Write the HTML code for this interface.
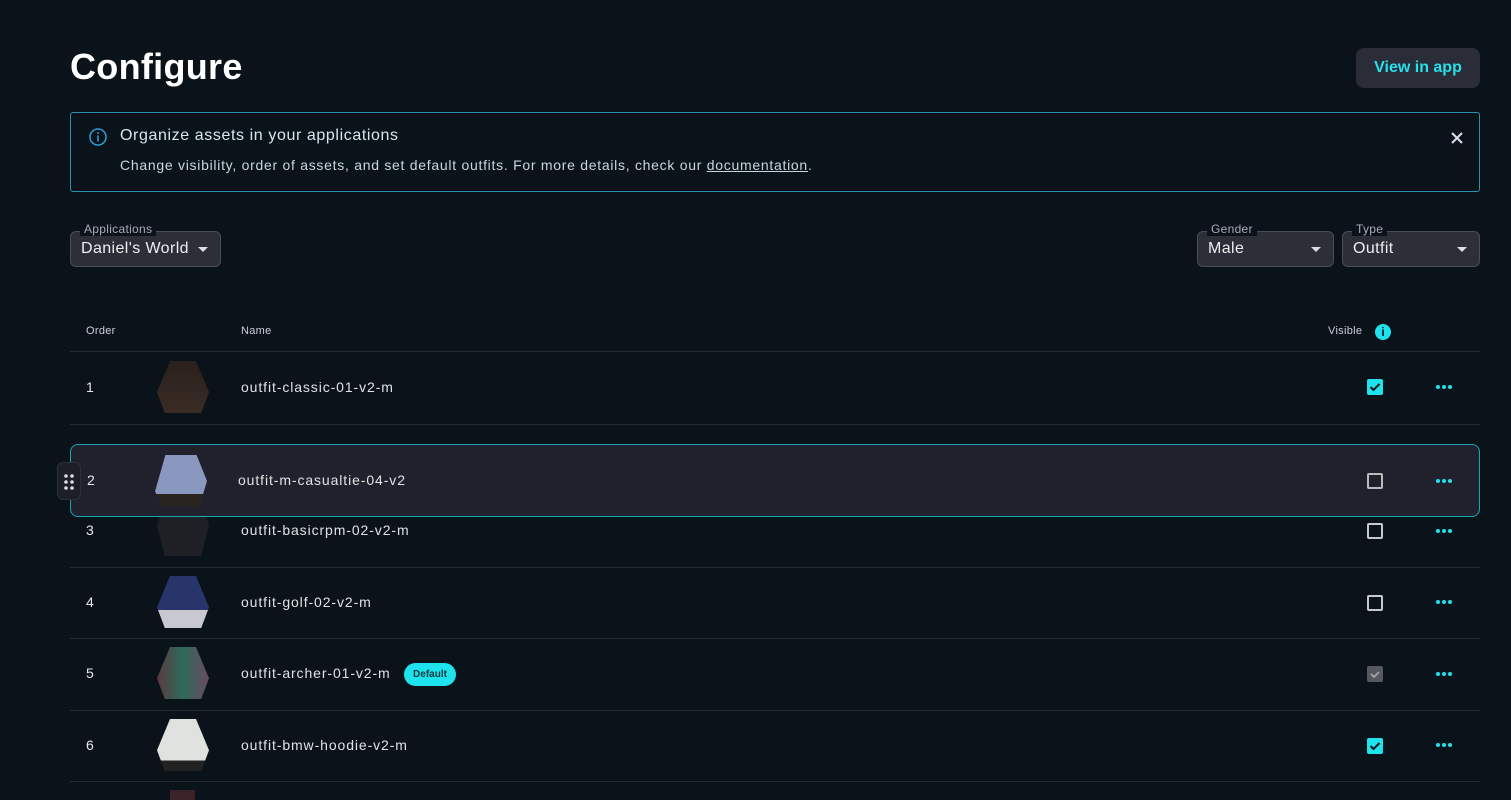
<!DOCTYPE html>
<html><head><meta charset="utf-8"><style>
*{box-sizing:border-box;margin:0;padding:0}
body{width:1511px;height:800px;overflow:hidden;background:#0a131a;font-family:"Liberation Sans",sans-serif;color:#e6e8ea;position:relative}
.a{position:absolute}
h1{position:absolute;left:70px;top:46px;font-size:36px;font-weight:bold;color:#fff;letter-spacing:0.3px}
.btn{left:1356px;top:48px;width:124px;height:40px;background:#2a2d38;border-radius:8px;color:#27e0ea;font-weight:bold;font-size:16px;text-align:center;line-height:40px}
.info{left:70px;top:112px;width:1410px;height:80px;border:1px solid #2a90b0;border-radius:3px}
.sel{background:#2c2e38;border:1px solid #4a4c58;border-radius:6px;height:36px;font-size:16px;padding-left:10px;line-height:34px;color:#eee;letter-spacing:0.4px}
.lbl{font-size:12px;color:#aab;letter-spacing:0.3px}
.caret{position:absolute;right:12px;top:15px;border-left:5px solid transparent;border-right:5px solid transparent;border-top:5px solid #ddd}
.hd{font-size:11px;color:#ccd;letter-spacing:0.3px}
.line{left:70px;width:1410px;height:1px;background:#232b33}
.num{left:86px;font-size:14px}
.name{left:241px;font-size:14px;color:#e0e2e4;letter-spacing:0.9px}
.thumb{left:157px;width:52px;height:52px}
.cb{left:1367px;width:16px;height:16px;border:2px solid #c8c8cc;border-radius:2px}
.cbon{background:#1ee3ec;border:none}
.dots{left:1436px;font-size:0}
.dots i{display:inline-block;width:4px;height:4px;border-radius:2px;background:#1ee3ec;margin-right:2px}
</style></head><body>
<h1>Configure</h1>
<div class="a btn">View in app</div>
<div class="a info">
 <svg class="a" style="left:17px;top:14px" width="20" height="20" viewBox="0 0 20 20"><circle cx="10" cy="10" r="8" fill="none" stroke="#2a9ad0" stroke-width="1.6"/><rect x="9.2" y="8.5" width="1.6" height="6" fill="#2a9ad0"/><circle cx="10" cy="6" r="1" fill="#2a9ad0"/></svg>
 <div class="a" style="left:49px;top:14px;font-size:16px;color:#d8e6ee;letter-spacing:0.6px">Organize assets in your applications</div>
 <div class="a" style="left:49px;top:44px;font-size:14px;color:#c8d6de;letter-spacing:0.72px">Change visibility, order of assets, and set default outfits. For more details, check our <u>documentation</u>.</div>
 <svg class="a" style="left:1379px;top:18px" width="14" height="14" viewBox="0 0 14 14"><path d="M2 2L12 12M12 2L2 12" stroke="#dde" stroke-width="2"/></svg>
</div>
<div class="a sel" style="left:70px;top:231px;width:151px">Daniel's World<span class="caret"></span></div>
<div class="a lbl" style="left:80px;top:222px;background:#0a131a;padding:0 4px">Applications</div>
<div class="a sel" style="left:1197px;top:231px;width:137px">Male<span class="caret"></span></div>
<div class="a lbl" style="left:1207px;top:222px;background:#0a131a;padding:0 4px">Gender</div>
<div class="a sel" style="left:1342px;top:231px;width:138px">Outfit<span class="caret"></span></div>
<div class="a lbl" style="left:1352px;top:222px;background:#0a131a;padding:0 4px">Type</div>

<div class="a hd" style="left:86px;top:325px">Order</div>
<div class="a hd" style="left:241px;top:325px">Name</div>
<div class="a hd" style="left:1328px;top:325px">Visible</div>
<div class="a" style="left:1375px;top:324px;width:16px;height:16px;border-radius:8px;background:#1ee3ec;color:#0a131a;font-size:12px;font-weight:bold;text-align:center;line-height:16px">i</div>
<div class="a line" style="top:351px"></div>

<div class="a num" style="top:379px">1</div>
<div class="a thumb" style="top:361px;background:linear-gradient(#2a201c,#3a2c24);clip-path:polygon(25% 0,75% 0,100% 60%,85% 100%,15% 100%,0 60%)"></div>
<div class="a name" style="top:379px">outfit-classic-01-v2-m</div>
<div class="a cb cbon" style="top:379px"><svg width="16" height="16"><path d="M3.5 8l3 3 6-6" stroke="#0a131a" stroke-width="2" fill="none"/></svg></div>
<div class="a dots" style="top:385px"><i></i><i></i><i></i></div>
<div class="a line" style="top:424px"></div>

<div class="a num" style="top:522px">3</div>
<div class="a thumb" style="top:504px;background:#1e2026;clip-path:polygon(15% 0,85% 0,100% 40%,85% 100%,15% 100%,0 40%)"></div>
<div class="a name" style="top:522px">outfit-basicrpm-02-v2-m</div>
<div class="a cb" style="top:523px"></div>
<div class="a dots" style="top:529px"><i></i><i></i><i></i></div>
<div class="a line" style="top:567px"></div>

<div class="a num" style="top:594px">4</div>
<div class="a thumb" style="top:576px;background:linear-gradient(#27356a 65%,#c8c8d0 65%);clip-path:polygon(25% 0,75% 0,100% 60%,85% 100%,15% 100%,0 60%)"></div>
<div class="a name" style="top:594px">outfit-golf-02-v2-m</div>
<div class="a cb" style="top:595px"></div>
<div class="a dots" style="top:600px"><i></i><i></i><i></i></div>
<div class="a line" style="top:638px"></div>

<div class="a num" style="top:665px">5</div>
<div class="a thumb" style="top:647px;background:linear-gradient(90deg,#5a3a40,#2e6a58,#6a4a60);clip-path:polygon(25% 0,75% 0,100% 60%,85% 100%,15% 100%,0 60%)"></div>
<div class="a name" style="top:665px">outfit-archer-01-v2-m</div>
<div class="a" style="left:404px;top:663px;width:52px;height:23px;border-radius:12px;background:#1ee3ec;color:#0a3a44;font-size:10px;font-weight:bold;text-align:center;line-height:23px">Default</div>
<div class="a cb" style="top:666px;background:#55585e;border-color:#55585e"><svg width="12" height="12" style="display:block"><path d="M2 6l3 3 5-5" stroke="#aaa" stroke-width="1.6" fill="none"/></svg></div>
<div class="a dots" style="top:672px"><i></i><i></i><i></i></div>
<div class="a line" style="top:710px"></div>

<div class="a num" style="top:737px">6</div>
<div class="a thumb" style="top:719px;background:linear-gradient(#e0e2e0 80%,#222 80%);clip-path:polygon(25% 0,75% 0,100% 60%,85% 100%,15% 100%,0 60%)"></div>
<div class="a name" style="top:737px">outfit-bmw-hoodie-v2-m</div>
<div class="a cb cbon" style="top:738px"><svg width="16" height="16"><path d="M3.5 8l3 3 6-6" stroke="#0a131a" stroke-width="2" fill="none"/></svg></div>
<div class="a dots" style="top:743px"><i></i><i></i><i></i></div>
<div class="a line" style="top:781px"></div>
<div class="a thumb" style="top:790px;background:#3a2228;height:10px;left:170px;width:25px"></div>

<div class="a" style="left:70px;top:444px;width:1410px;height:73px;background:#20212c;border:1px solid #1aa8b0;border-radius:8px">
 <div class="a" style="left:16px;top:27px;font-size:14px">2</div>
 <div class="a" style="left:84px;top:10px;width:52px;height:52px;background:linear-gradient(#8a98c0 75%,#2a2420 75%);clip-path:polygon(20% 0,80% 0,100% 50%,85% 100%,15% 100%,0 70%)"></div>
 <div class="a" style="left:167px;top:27px;font-size:14px;color:#e0e2e4;letter-spacing:0.9px">outfit-m-casualtie-04-v2</div>
 <div class="a" style="left:1296px;top:28px;width:16px;height:16px;border:2px solid #bbb;border-radius:2px"></div>
 <div class="a dots" style="left:1365px;top:34px"><i></i><i></i><i></i></div>
</div>
<div class="a" style="left:57px;top:462px;width:24px;height:38px;background:#1c1f28;border:1px solid #2e3038;border-radius:6px">
 <svg width="22" height="36"><g fill="#ddd"><circle cx="8" cy="13" r="1.8"/><circle cx="14" cy="13" r="1.8"/><circle cx="8" cy="19" r="1.8"/><circle cx="14" cy="19" r="1.8"/><circle cx="8" cy="25" r="1.8"/><circle cx="14" cy="25" r="1.8"/></g></svg>
</div>
</body></html>
